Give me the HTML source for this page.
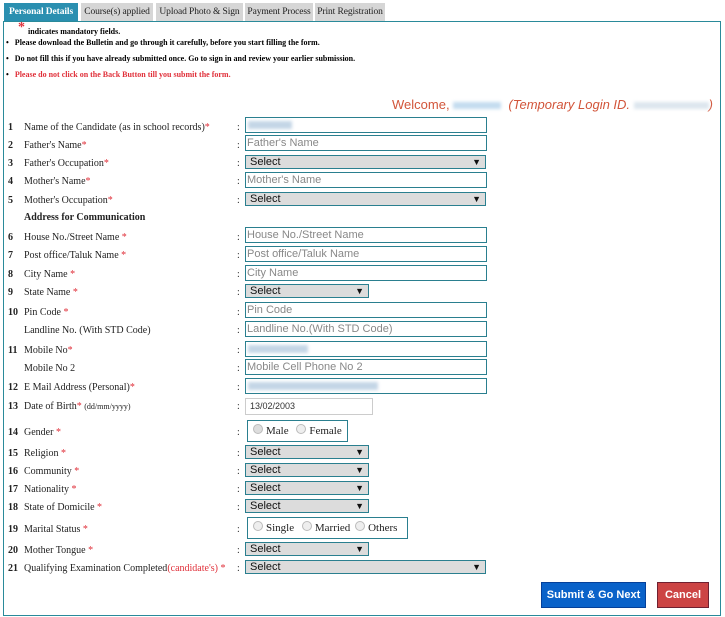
<!DOCTYPE html>
<html><head><meta charset="utf-8"><style>
body{margin:0;width:725px;height:617px;background:#fff;position:relative;overflow:hidden;font-family:"Liberation Serif",serif;}
.a{position:absolute;}
.tab{position:absolute;top:3px;height:18px;background:#d6d6d6;font:9.5px "Liberation Serif",serif;line-height:18px;text-align:center;color:#222;white-space:nowrap;overflow:hidden;letter-spacing:-0.1px;}
.frame{position:absolute;left:3px;top:21px;width:716px;height:593px;border:1px solid #2a8a9a;}
.lbl{position:absolute;left:24px;font-size:10px;color:#222;line-height:12px;margin-top:2px;white-space:nowrap;}
.num{position:absolute;left:8px;font-size:10px;font-weight:bold;color:#222;line-height:12px;margin-top:2px;}
.col{position:absolute;left:237px;font-size:10px;color:#333;line-height:12px;margin-top:2px;}
.r{color:#e0303a;}
.inp{position:absolute;left:245px;width:239px;height:14px;border:1px solid #2a7f8f;background:#fff;font:11px "Liberation Sans",sans-serif;color:#888;line-height:14px;padding-left:1px;box-sizing:content-box;}
.sel{position:absolute;left:245px;height:12px;border:1px solid #2a7f8f;background:#dcdcdc;font:11px "Liberation Sans",sans-serif;color:#111;line-height:12px;padding-left:4px;}
.sel:after{content:"▼";position:absolute;right:4px;top:0;font-size:9px;}
.blur{position:absolute;left:2px;top:3px;height:8px;background:#c4d6e6;filter:blur(1.5px);}
.box{position:absolute;left:247px;border:1px solid #2a7f8f;font-size:11px;color:#222;line-height:20px;}
.rad{display:inline-block;width:8px;height:8px;border:1px solid #bbb;border-radius:50%;background:#eee;margin:0 3px 0 5px;vertical-align:0;}
</style></head><body>
<div class="tab" style="left:4px;width:74px;background:#2a8fb0;color:#fff;font-weight:bold;">Personal Details</div>
<div class="tab" style="left:81px;width:72px;">Course(s) applied</div>
<div class="tab" style="left:156px;width:87px;">Upload Photo &amp; Sign</div>
<div class="tab" style="left:245px;width:68px;">Payment Process</div>
<div class="tab" style="left:315px;width:70px;">Print Registration</div>
<div class="frame"></div>
<div class="a r" style="left:18px;top:20px;font-size:14px;font-weight:bold;">*</div>
<div class="a" style="left:28px;top:27px;font-size:8px;font-weight:bold;">indicates mandatory fields.</div>
<div class="a" style="left:6px;top:38px;font-size:8px;font-weight:bold;">•&nbsp;&nbsp;&nbsp;Please download the Bulletin and go through it carefully, before you start filling the form.</div>
<div class="a" style="left:6px;top:54px;font-size:8px;font-weight:bold;">•&nbsp;&nbsp;&nbsp;Do not fill this if you have already submitted once. Go to sign in and review your earlier submission.</div>
<div class="a" style="left:6px;top:70px;font-size:8px;font-weight:bold;"><span>•</span>&nbsp;&nbsp;&nbsp;<span class="r">Please do not click on the Back Button till you submit the form.</span></div>
<div class="a" style="left:392px;top:97px;font:13px 'Liberation Sans',sans-serif;color:#d2553a;white-space:nowrap;">Welcome, <span style="display:inline-block;width:48px;height:7px;background:#c4dcef;filter:blur(1.5px);"></span> &nbsp;<i>(Temporary Login ID. <span style="display:inline-block;width:75px;height:7px;background:#dde6ee;filter:blur(1.5px);"></span>)</i></div>

<div class="num" style="top:120px">1</div><div class="lbl" style="top:120px">Name of the Candidate (as in school records)<span class="r">*</span></div><div class="col" style="top:120px">:</div><div class="inp" style="top:117px"><div class="blur" style="width:44px"></div></div>
<div class="num" style="top:138px">2</div><div class="lbl" style="top:138px">Father's Name<span class="r">*</span></div><div class="col" style="top:138px">:</div><div class="inp" style="top:135px">Father's Name</div>
<div class="num" style="top:156px">3</div><div class="lbl" style="top:156px">Father's Occupation<span class="r">*</span></div><div class="col" style="top:156px">:</div><div class="sel" style="top:155px;width:235px">Select</div>
<div class="num" style="top:174px">4</div><div class="lbl" style="top:174px">Mother's Name<span class="r">*</span></div><div class="col" style="top:174px">:</div><div class="inp" style="top:172px">Mother's Name</div>
<div class="num" style="top:193px">5</div><div class="lbl" style="top:193px">Mother's Occupation<span class="r">*</span></div><div class="col" style="top:193px">:</div><div class="sel" style="top:192px;width:235px">Select</div>
<div class="lbl" style="top:210px;font-weight:bold">Address for Communication</div>
<div class="num" style="top:230px">6</div><div class="lbl" style="top:230px">House No./Street Name <span class="r">*</span></div><div class="col" style="top:230px">:</div><div class="inp" style="top:227px">House No./Street Name</div>
<div class="num" style="top:248px">7</div><div class="lbl" style="top:248px">Post office/Taluk Name <span class="r">*</span></div><div class="col" style="top:248px">:</div><div class="inp" style="top:246px">Post office/Taluk Name</div>
<div class="num" style="top:267px">8</div><div class="lbl" style="top:267px">City Name <span class="r">*</span></div><div class="col" style="top:267px">:</div><div class="inp" style="top:265px">City Name</div>
<div class="num" style="top:285px">9</div><div class="lbl" style="top:285px">State Name <span class="r">*</span></div><div class="col" style="top:285px">:</div><div class="sel" style="top:284px;width:118px">Select</div>
<div class="num" style="top:305px">10</div><div class="lbl" style="top:305px">Pin Code <span class="r">*</span></div><div class="col" style="top:305px">:</div><div class="inp" style="top:302px">Pin Code</div>
<div class="lbl" style="top:323px">Landline No. (With STD Code)</div><div class="col" style="top:323px">:</div><div class="inp" style="top:321px">Landline No.(With STD Code)</div>
<div class="num" style="top:343px">11</div><div class="lbl" style="top:343px">Mobile No<span class="r">*</span></div><div class="col" style="top:343px">:</div><div class="inp" style="top:341px"><div class="blur" style="width:60px"></div></div>
<div class="lbl" style="top:361px">Mobile No 2</div><div class="col" style="top:361px">:</div><div class="inp" style="top:359px">Mobile Cell Phone No 2</div>
<div class="num" style="top:380px">12</div><div class="lbl" style="top:380px">E Mail Address (Personal)<span class="r">*</span></div><div class="col" style="top:380px">:</div><div class="inp" style="top:378px"><div class="blur" style="width:130px"></div></div>
<div class="num" style="top:399px">13</div><div class="lbl" style="top:399px">Date of Birth<span class="r">*</span> <span style="font-size:8px">(dd/mm/yyyy)</span></div><div class="col" style="top:399px">:</div><div class="inp" style="top:398px;width:122px;height:15px;border-color:#ccc;color:#333;font-size:9px;padding-left:4px;">13/02/2003</div>
<div class="num" style="top:425px">14</div><div class="lbl" style="top:425px">Gender <span class="r">*</span></div><div class="col" style="top:425px">:</div><div class="box" style="top:420px;width:99px;height:20px;"><span class="rad" style="background:#ddd"></span>Male <span class="rad"></span>Female</div>
<div class="num" style="top:446px">15</div><div class="lbl" style="top:446px">Religion <span class="r">*</span></div><div class="col" style="top:446px">:</div><div class="sel" style="top:445px;width:118px">Select</div>
<div class="num" style="top:464px">16</div><div class="lbl" style="top:464px">Community <span class="r">*</span></div><div class="col" style="top:464px">:</div><div class="sel" style="top:463px;width:118px">Select</div>
<div class="num" style="top:482px">17</div><div class="lbl" style="top:482px">Nationality <span class="r">*</span></div><div class="col" style="top:482px">:</div><div class="sel" style="top:481px;width:118px">Select</div>
<div class="num" style="top:500px">18</div><div class="lbl" style="top:500px">State of Domicile <span class="r">*</span></div><div class="col" style="top:500px">:</div><div class="sel" style="top:499px;width:118px">Select</div>
<div class="num" style="top:522px">19</div><div class="lbl" style="top:522px">Marital Status <span class="r">*</span></div><div class="col" style="top:522px">:</div><div class="box" style="top:517px;width:159px;height:20px;"><span class="rad"></span>Single <span class="rad"></span>Married <span class="rad" style="margin-left:2px"></span>Others</div>
<div class="num" style="top:543px">20</div><div class="lbl" style="top:543px">Mother Tongue <span class="r">*</span></div><div class="col" style="top:543px">:</div><div class="sel" style="top:542px;width:118px">Select</div>
<div class="num" style="top:561px">21</div><div class="lbl" style="top:561px">Qualifying Examination Completed<span class="r">(candidate's) *</span></div><div class="col" style="top:561px">:</div><div class="sel" style="top:560px;width:235px">Select</div>

<div class="a" style="left:541px;top:582px;width:105px;height:26px;background:#0a62c9;border:1px solid #05409a;box-sizing:border-box;color:#fff;font:bold 11px 'Liberation Sans',sans-serif;line-height:24px;text-align:center;">Submit &amp; Go Next</div>
<div class="a" style="left:657px;top:582px;width:52px;height:26px;background:#cc4444;border:1px solid #702030;box-sizing:border-box;color:#fff;font:bold 11px 'Liberation Sans',sans-serif;line-height:24px;text-align:center;">Cancel</div>
</body></html>
